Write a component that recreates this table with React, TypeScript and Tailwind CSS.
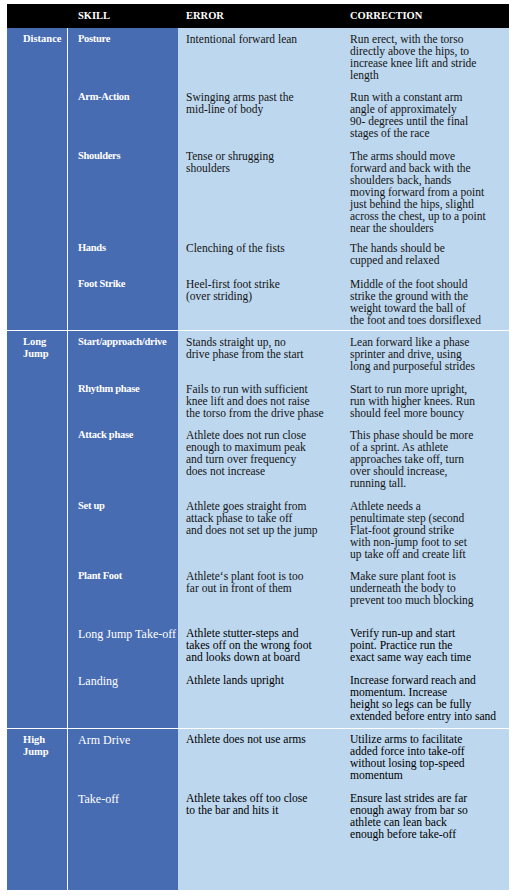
type Row = {
  skill: string;
  h: number;
  large?: boolean;
  error: string[];
  corr: string[];
};

type Section = { name: string[]; rows: Row[] };

const sections: Section[] = [
  {
    name: ["Distance"],
    rows: [
      {
        skill: "Posture",
        h: 58,
        error: ["Intentional forward lean"],
        corr: [
          "Run erect, with the torso",
          "directly above the hips, to",
          "increase knee lift and stride",
          "length",
        ],
      },
      {
        skill: "Arm-Action",
        h: 59,
        error: ["Swinging arms past the", "mid-line of body"],
        corr: [
          "Run with a constant arm",
          "angle of approximately",
          "90- degrees until the final",
          "stages of the race",
        ],
      },
      {
        skill: "Shoulders",
        h: 92,
        error: ["Tense or shrugging", "shoulders"],
        corr: [
          "The arms should move",
          "forward and back with the",
          "shoulders back, hands",
          "moving forward from a point",
          "just behind the hips, slightl",
          "across the chest, up to a point",
          "near the shoulders",
        ],
      },
      {
        skill: "Hands",
        h: 36,
        error: ["Clenching of the fists"],
        corr: ["The hands should be", "cupped and relaxed"],
      },
      {
        skill: "Foot Strike",
        h: 57,
        error: ["Heel-first foot strike", "(over striding)"],
        corr: [
          "Middle of the foot should",
          "strike the ground with the",
          "weight toward the ball of",
          "the foot and toes dorsiflexed",
        ],
      },
    ],
  },
  {
    name: ["Long", "Jump"],
    rows: [
      {
        skill: "Start/approach/drive",
        h: 47,
        error: ["Stands straight up, no", "drive phase from the start"],
        corr: [
          "Lean forward like a phase",
          "sprinter and drive, using",
          "long and purposeful strides",
        ],
      },
      {
        skill: "Rhythm phase",
        h: 46,
        error: [
          "Fails to run with sufficient",
          "knee lift and does not raise",
          "the torso from the drive phase",
        ],
        corr: [
          "Start to run more upright,",
          "run with higher knees. Run",
          "should feel more bouncy",
        ],
      },
      {
        skill: "Attack phase",
        h: 71,
        error: [
          "Athlete does not run close",
          "enough to maximum peak",
          "and turn over frequency",
          "does not increase",
        ],
        corr: [
          "This phase should be more",
          "of a sprint. As athlete",
          "approaches take off, turn",
          "over should increase,",
          "running tall.",
        ],
      },
      {
        skill: "Set up",
        h: 70,
        error: [
          "Athlete goes straight from",
          "attack phase to take off",
          "and does not set up the jump",
        ],
        corr: [
          "Athlete needs a",
          "penultimate step (second",
          "Flat-foot ground strike",
          "with non-jump foot to set",
          "up take off and create lift",
        ],
      },
      {
        skill: "Plant Foot",
        h: 58,
        error: ["Athlete‘s plant foot is too", "far out in front of them"],
        corr: [
          "Make sure plant foot is",
          "underneath the body to",
          "prevent too much blocking",
        ],
      },
      {
        skill: "Long Jump Take-off",
        h: 47,
        large: true,
        error: [
          "Athlete stutter-steps and",
          "takes off on the wrong foot",
          "and looks down at board",
        ],
        corr: [
          "Verify run-up and start",
          "point. Practice run the",
          "exact same way each time",
        ],
      },
      {
        skill: "Landing",
        h: 58,
        large: true,
        error: ["Athlete lands upright"],
        corr: [
          "Increase forward reach and",
          "momentum. Increase",
          "height so legs can be fully",
          "extended before entry into sand",
        ],
      },
    ],
  },
  {
    name: ["High", "Jump"],
    rows: [
      {
        skill: "Arm Drive",
        h: 59,
        large: true,
        error: ["Athlete does not use arms"],
        corr: [
          "Utilize arms to facilitate",
          "added force into take-off",
          "without losing top-speed",
          "momentum",
        ],
      },
      {
        skill: "Take-off",
        h: 102,
        large: true,
        error: ["Athlete takes off too close", "to the bar and hits it"],
        corr: [
          "Ensure last strides are far",
          "enough away from bar so",
          "athlete can lean back",
          "enough before take-off",
        ],
      },
    ],
  },
];

function Lines({ lines }: { lines: string[] }) {
  return (
    <>
      {lines.map((l, i) => (
        <div key={i} className="whitespace-nowrap">
          {l}
        </div>
      ))}
    </>
  );
}

function TableRow({ row }: { row: Row }) {
  // the lower rows of the sheet are set in plain, slightly larger type
  const body = row.large ? "text-[11.6px] leading-[12px] text-black" : "text-[11.5px] leading-[12px] text-[#141414]";
  return (
    <div className="grid grid-cols-[110px_164px_1fr]" style={{ height: row.h }}>
      <div
        className={
          "bg-[#476cb2] pl-[10px] pt-[5px] text-white " +
          (row.large
            ? "text-[12px] leading-[12px]"
            : "text-[10.5px] font-bold leading-[12px] tracking-[-0.3px]")
        }
      >
        {row.skill}
      </div>
      <div className={"bg-[#bdd7ee] pl-[8px] pt-[5px] " + body}>
        <Lines lines={row.error} />
      </div>
      <div className={"bg-[#bdd7ee] pl-[8px] pt-[5px] " + body}>
        <Lines lines={row.corr} />
      </div>
    </div>
  );
}

export default function App() {
  return (
    <div
      className="min-h-[896px] bg-white pt-[4px] pl-[7px]"
      style={{ fontFamily: '"Liberation Serif", "Times New Roman", serif' }}
    >
      <div className="w-[502px]">
        <div className="grid h-[24px] grid-cols-[61px_110px_164px_1fr] items-center bg-black text-[10.5px] font-bold text-white">
          <div />
          <div className="pl-[10px]">SKILL</div>
          <div className="pl-[8px]">ERROR</div>
          <div className="pl-[8px]">CORRECTION</div>
        </div>
        {sections.map((s, i) => (
          <div key={i} className={"flex " + (i > 0 ? "border-t border-white" : "")}>
            <div className="w-[61px] shrink-0 border-r border-white bg-[#476cb2] pl-[16px] pt-[5px] text-[10.5px] font-bold leading-[12px] text-white">
              <Lines lines={s.name} />
            </div>
            <div className="flex flex-1 flex-col">
              {s.rows.map((r, j) => (
                <TableRow key={j} row={r} />
              ))}
            </div>
          </div>
        ))}
      </div>
    </div>
  );
}
